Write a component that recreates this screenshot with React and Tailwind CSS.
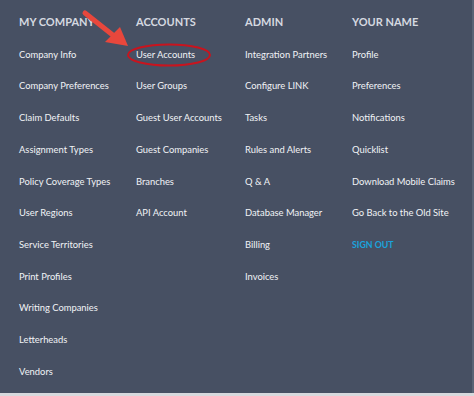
import React from 'react';

const columns = [
  {
    title: 'MY COMPANY',
    width: 'w-[117px]',
    items: ['Company Info', 'Company Preferences', 'Claim Defaults', 'Assignment Types', 'Policy Coverage Types', 'User Regions', 'Service Territories', 'Print Profiles', 'Writing Companies', 'Letterheads', 'Vendors'],
  },
  {
    title: 'ACCOUNTS',
    width: 'w-[109px]',
    items: ['User Accounts', 'User Groups', 'Guest User Accounts', 'Guest Companies', 'Branches', 'API Account'],
  },
  {
    title: 'ADMIN',
    width: 'w-[107px]',
    items: ['Integration Partners', 'Configure LINK', 'Tasks', 'Rules and Alerts', 'Q & A', 'Database Manager', 'Billing', 'Invoices'],
  },
  {
    title: 'YOUR NAME',
    width: 'flex-1',
    items: ['Profile', 'Preferences', 'Notifications', 'Quicklist', 'Download Mobile Claims', 'Go Back to the Old Site'],
    signOut: true,
  },
];

function MenuColumn({ col }) {
  return (
    <div className={`${col.width} flex flex-col`}>
      <div className="h-[33px] flex items-center text-[11px] font-bold text-[#d5d9e0]">
        {col.title}
      </div>
      {col.items.map((item) => (
        <div key={item} className="h-[31.7px] flex items-center text-[9.4px] text-[#f1f3f6] whitespace-nowrap">
          {item}
        </div>
      ))}
      {col.signOut && (
        <div className="h-[31.7px] flex items-center text-[8.8px] font-bold text-[#19a3dd]">SIGN OUT</div>
      )}
    </div>
  );
}

export default function App() {
  return (
    <div className="w-[474px] h-[396px] flex flex-col bg-[#d7d9dd] font-['Lato',sans-serif]">
      <div className="relative flex-1 flex bg-[#475063] pl-[19px] pt-[6px] border-r-2 border-[#5a6375]">
        {columns.map((col) => (
          <MenuColumn key={col.title} col={col} />
        ))}
        <svg className="absolute left-0 top-0 pointer-events-none" width="474" height="396">
          <ellipse cx="169" cy="55" rx="41" ry="10.5" fill="none" stroke="#c8141e" strokeWidth="2" />
          <line x1="85" y1="13" x2="114" y2="36" stroke="#e8473c" strokeWidth="5" strokeLinecap="round" />
          <polygon points="128,46 105,42 120,27" fill="#e8473c" />
        </svg>
      </div>
      <div className="h-[3px]" />
    </div>
  );
}
